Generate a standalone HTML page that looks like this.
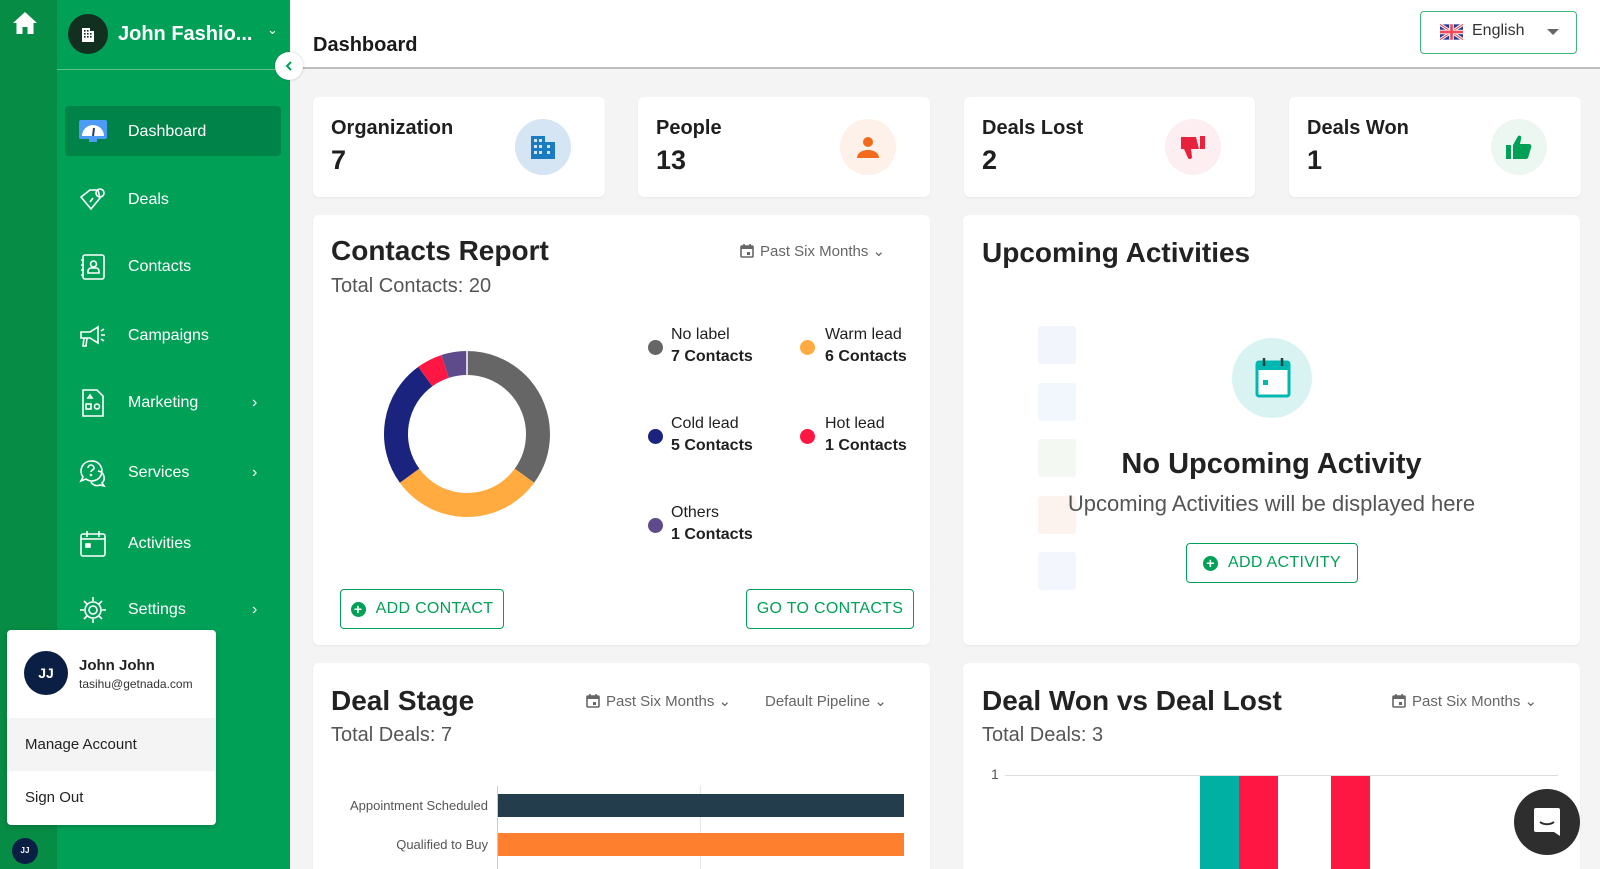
<!DOCTYPE html>
<html style="width:1600px;height:869px;overflow:hidden"><head><meta charset="utf-8"><style>
*{box-sizing:border-box;margin:0;padding:0}
body{width:1600px;height:869px;overflow:hidden;font-family:"Liberation Sans",sans-serif;background:#f4f4f4;position:relative;color:#1f1f1f}
.abs{position:absolute}
.strip{left:0;top:0;width:57px;height:869px;background:#078c45}
.side{left:57px;top:0;width:233px;height:869px;background:#00a157}
.nav{position:absolute;left:128px;color:#fff;font-size:16px;transform:translateY(-50%)}
.ico{position:absolute;left:78px;width:30px;height:30px;transform:translateY(-50%)}
.chev{position:absolute;left:252px;color:#fff;font-size:16px;transform:translateY(-50%)}
.card{position:absolute;background:#fff;border-radius:6px;box-shadow:0 1px 2px rgba(0,0,0,.06);overflow:hidden}
.stl{position:absolute;left:18px;top:20px;font-size:20px;font-weight:bold}
.stn{position:absolute;left:18px;top:48px;font-size:27px;font-weight:bold}
.sic{position:absolute;right:34px;top:22px;width:56px;height:56px;border-radius:50%}
.btn{position:absolute;border:1.5px solid #00a157;border-radius:4px;color:#00a157;font-size:16px;display:flex;align-items:center;justify-content:center;gap:10px;letter-spacing:.3px}
.plus{width:15px;height:15px;border-radius:50%;background:#00a157;color:#fff;font-size:14px;line-height:15px;text-align:center;font-weight:bold}
.lg{position:absolute;font-size:16px;line-height:22px}
.lg b{display:block}
.dot{position:absolute;width:15px;height:15px;border-radius:50%}
.h2{position:absolute;font-size:28px;font-weight:bold;color:#222}
.sub{position:absolute;font-size:20px;color:#555}
.flt{position:absolute;font-size:15px;color:#666;display:flex;align-items:center;gap:6px}
</style></head><body>
<svg width="0" height="0" style="position:absolute"><defs><symbol id="cal" viewBox="0 0 14 14"><rect x="1" y="2" width="12" height="11" rx="1" fill="none" stroke="#666" stroke-width="1.6"/><rect x="1" y="2" width="12" height="3" fill="#666"/><path d="M4 0v3M10 0v3" stroke="#666" stroke-width="1.6"/><rect x="7" y="8" width="3" height="3" fill="#666"/></symbol></defs></svg>
<div class="abs strip"></div>
<svg class="abs" style="left:12px;top:11px" width="26" height="24" viewBox="0 0 26 24"><path d="M13 1L1 12h3.5v11h6v-7h5v7h6V12H25z" fill="#fff"/></svg>
<div class="abs side"></div>
<div class="abs" style="left:68px;top:14px;width:40px;height:40px;border-radius:50%;background:#12301f"></div>
<svg class="abs" style="left:79px;top:25px" width="18" height="18" viewBox="0 0 18 18"><path d="M3 17V3h8v3h4v11z" fill="#fff"/><g fill="#12301f"><rect x="5" y="5" width="1.6" height="1.6"/><rect x="8" y="5" width="1.6" height="1.6"/><rect x="5" y="8" width="1.6" height="1.6"/><rect x="8" y="8" width="1.6" height="1.6"/><rect x="11" y="8" width="1.6" height="1.6"/><rect x="5" y="11" width="1.6" height="1.6"/><rect x="8" y="11" width="1.6" height="1.6"/><rect x="11" y="11" width="1.6" height="1.6"/></g></svg>
<div class="abs" style="left:118px;top:23px;color:#fff;font-size:20px;font-weight:bold">John Fashio...</div>
<div class="abs" style="left:267px;top:22px;color:#fff;font-size:13px">&#8964;</div>
<div class="abs" style="left:57px;top:69px;width:233px;height:1px;background:rgba(255,255,255,.35)"></div>

<div class="abs" style="left:65px;top:106px;width:216px;height:50px;background:#008348;border-radius:4px"></div>
<svg class="ico" style="top:131px" viewBox="0 0 30 30"><rect x="1" y="4" width="28" height="19" rx="2" fill="#4d9bf5"/><path d="M4 20a11 11 0 0122 0z" fill="#fff"/><path d="M15 20l1-8" stroke="#1f3c7a" stroke-width="2"/><rect x="11" y="23" width="8" height="3" fill="#4d9bf5"/></svg>
<div class="nav" style="top:132px">Dashboard</div>
<svg class="ico" style="top:200px" viewBox="0 0 30 30" fill="none" stroke="#fff" stroke-width="1.6"><path d="M3 12l9-7h8l2 8-9 11z"/><circle cx="22" cy="8" r="4"/><path d="M12 17l3-4"/></svg>
<div class="nav" style="top:200px">Deals</div>
<svg class="ico" style="top:267px" viewBox="0 0 30 30" fill="none" stroke="#fff" stroke-width="1.6"><rect x="5" y="3" width="21" height="24" rx="2"/><circle cx="15.5" cy="12" r="3"/><path d="M10 21h11v-2a3 3 0 00-3-3h-5a3 3 0 00-3 3z"/><path d="M3 8h3M3 13h3M3 18h3M3 23h3"/></svg>
<div class="nav" style="top:267px">Contacts</div>
<svg class="ico" style="top:336px" viewBox="0 0 30 30" fill="none" stroke="#fff" stroke-width="1.6"><path d="M3 11h9l8-5v16l-8-5H3z"/><path d="M6 17l-1 8h3l1-8"/><path d="M23 10l3-2M23 14h4M23 18l3 2"/></svg>
<div class="nav" style="top:336px">Campaigns</div>
<svg class="ico" style="top:403px" viewBox="0 0 30 30" fill="none" stroke="#fff" stroke-width="1.6"><path d="M5 2h14l6 6v20H5z"/><path d="M10 10l2-3 2 3z"/><rect x="8" y="16" width="5" height="5"/><circle cx="19" cy="18.5" r="2.5"/></svg>
<div class="nav" style="top:403px">Marketing</div><div class="chev" style="top:403px">›</div>
<svg class="ico" style="top:473px" viewBox="0 0 30 30" fill="none" stroke="#fff" stroke-width="1.6"><path d="M13 3a10 10 0 00-8 16l-2 4 5-2a10 10 0 105-18z"/><path d="M20 13a7 7 0 014 12l2 3-4-1a7 7 0 01-9-3"/><path d="M10 10a3 3 0 116 0c0 2-3 2-3 4"/><circle cx="13" cy="17" r=".5"/></svg>
<div class="nav" style="top:473px">Services</div><div class="chev" style="top:473px">›</div>
<svg class="ico" style="top:544px" viewBox="0 0 30 30" fill="none" stroke="#fff" stroke-width="1.6"><rect x="3" y="5" width="24" height="22" rx="2"/><path d="M3 10h24M9 2v6M21 2v6"/><rect x="8" y="15" width="4" height="3" fill="#fff"/></svg>
<div class="nav" style="top:544px">Activities</div>
<svg class="ico" style="top:610px" viewBox="0 0 30 30" fill="none" stroke="#fff" stroke-width="1.6"><circle cx="15" cy="15" r="4"/><circle cx="15" cy="15" r="8"/><path d="M15 2v4M15 24v4M2 15h4M24 15h4M6 6l3 3M21 21l3 3M6 24l3-3M21 9l3-3"/></svg>
<div class="nav" style="top:610px">Settings</div><div class="chev" style="top:610px">›</div>

<div class="abs" style="left:290px;top:0;width:1310px;height:69px;background:#fff;border-bottom:2px solid #bdbdbd"></div>
<div class="abs" style="left:313px;top:34px;font-size:20px;font-weight:bold;color:#1a1a1a">Dashboard</div>
<div class="abs" style="left:275px;top:52px;width:28px;height:28px;border-radius:50%;background:#fff;box-shadow:0 0 3px rgba(0,0,0,.2)"></div>
<svg class="abs" style="left:283px;top:60px" width="12" height="12" viewBox="0 0 12 12"><path d="M8 2L4 6l4 4" stroke="#00a157" stroke-width="2" fill="none"/></svg>
<div class="abs" style="left:1420px;top:11px;width:157px;height:43px;border:1.5px solid #3cb878;border-radius:4px"></div>
<svg class="abs" style="left:1440px;top:21px" width="23" height="22" viewBox="0 0 60 40"><rect width="60" height="40" fill="#273d8d"/><path d="M0 0l60 40M60 0L0 40" stroke="#fff" stroke-width="8"/><path d="M0 0l60 40M60 0L0 40" stroke="#f04a5a" stroke-width="3"/><path d="M30 0v40M0 20h60" stroke="#fff" stroke-width="12"/><path d="M30 0v40M0 20h60" stroke="#f04a5a" stroke-width="7"/></svg>
<div class="abs" style="left:1472px;top:22px;font-size:16px;color:#333">English</div>
<div class="abs" style="left:1547px;top:29px;width:0;height:0;border-left:6px solid transparent;border-right:6px solid transparent;border-top:6px solid #666"></div>

<div class="card" style="left:313px;top:97px;width:292px;height:100px"><div class="stl">Organization</div><div class="stn">7</div><div class="sic" style="background:#d5e5f3"><svg style="margin:14px" width="28" height="28" viewBox="0 0 28 28"><path d="M2 26V3h14v6h10v17z" fill="#1a7bc0"/><g fill="#d5e5f3"><rect x="5" y="6" width="3" height="3"/><rect x="10" y="6" width="3" height="3"/><rect x="5" y="12" width="3" height="3"/><rect x="10" y="12" width="3" height="3"/><rect x="18" y="12" width="3" height="3"/><rect x="5" y="18" width="3" height="3"/><rect x="10" y="18" width="3" height="3"/><rect x="18" y="18" width="3" height="3"/></g></svg></div></div>
<div class="card" style="left:638px;top:97px;width:292px;height:100px"><div class="stl">People</div><div class="stn">13</div><div class="sic" style="background:#fdf1ea"><svg style="margin:16px" width="24" height="24" viewBox="0 0 24 24"><circle cx="12" cy="7" r="5" fill="#f26b1d"/><path d="M1 23c0-5 5-8 11-8s11 3 11 8z" fill="#f26b1d"/></svg></div></div>
<div class="card" style="left:964px;top:97px;width:291px;height:100px"><div class="stl">Deals Lost</div><div class="stn">2</div><div class="sic" style="background:#fdeef1"><svg style="margin:14px" width="28" height="28" viewBox="0 0 28 28"><path d="M2 4h15l3 12H12l1 8c0 2-3 3-4 1L5 16H2z" fill="#e8213d"/><rect x="21" y="3" width="5" height="13" fill="#e8213d"/></svg></div></div>
<div class="card" style="left:1289px;top:97px;width:292px;height:100px"><div class="stl">Deals Won</div><div class="stn">1</div><div class="sic" style="background:#edf7f1"><svg style="margin:14px" width="28" height="28" viewBox="0 0 28 28"><rect x="1" y="12" width="5" height="14" fill="#00a157"/><path d="M8 12l5-9c2-1 4 0 3 3l-1 5h9c2 0 3 2 2 4l-3 10c-1 1-2 1-3 1H8z" fill="#00a157"/></svg></div></div>

<div class="card" style="left:313px;top:215px;width:617px;height:430px">
<div class="h2" style="left:18px;top:20px">Contacts Report</div>
<div class="sub" style="left:18px;top:60px">Total Contacts: 20</div>
<div class="flt" style="left:427px;top:27px"><svg width="14" height="14"><use href="#cal"/></svg>Past Six Months &#8964;</div>
</div>
<svg class="abs" style="left:383px;top:350px" width="168" height="168" viewBox="-84 -84 168 168">
<g fill="none" stroke-width="24">
<circle r="71" stroke="#666" stroke-dasharray="156.1 446" transform="rotate(-90)"/>
<circle r="71" stroke="#ffab40" stroke-dasharray="133.8 446" transform="rotate(36)"/>
<circle r="71" stroke="#1a237e" stroke-dasharray="111.5 446" transform="rotate(144)"/>
<circle r="71" stroke="#ff1744" stroke-dasharray="22.3 446" transform="rotate(234)"/>
<circle r="71" stroke="#5e4b8b" stroke-dasharray="22.3 446" transform="rotate(252)"/>
</g>
<g stroke="#fff" stroke-width="1.5"><path d="M0-84v25"/></g>
</svg>
<div class="dot" style="left:648px;top:340px;background:#666"></div><div class="lg" style="left:671px;top:324px">No label<b>7 Contacts</b></div>
<div class="dot" style="left:800px;top:340px;background:#ffab40"></div><div class="lg" style="left:825px;top:324px">Warm lead<b>6 Contacts</b></div>
<div class="dot" style="left:648px;top:429px;background:#1a237e"></div><div class="lg" style="left:671px;top:413px">Cold lead<b>5 Contacts</b></div>
<div class="dot" style="left:800px;top:429px;background:#ff1744"></div><div class="lg" style="left:825px;top:413px">Hot lead<b>1 Contacts</b></div>
<div class="dot" style="left:648px;top:518px;background:#5e4b8b"></div><div class="lg" style="left:671px;top:502px">Others<b>1 Contacts</b></div>
<div class="btn" style="left:340px;top:589px;width:164px;height:40px"><span class="plus">+</span>ADD CONTACT</div>
<div class="btn" style="left:746px;top:589px;width:168px;height:40px">GO TO CONTACTS</div>

<div class="card" style="left:963px;top:215px;width:617px;height:430px">
<div class="h2" style="left:19px;top:22px">Upcoming Activities</div>
<div style="position:absolute;left:75px;top:111px;width:38px;height:38px;background:#f0f3fb;border-radius:3px;opacity:.8"></div>
<div style="position:absolute;left:75px;top:168px;width:38px;height:38px;background:#eef5fd;border-radius:3px;opacity:.8"></div>
<div style="position:absolute;left:75px;top:224px;width:38px;height:38px;background:#f1f6ef;border-radius:3px;opacity:.8"></div>
<div style="position:absolute;left:75px;top:281px;width:38px;height:38px;background:#fdf0ea;border-radius:3px;opacity:.8"></div>
<div style="position:absolute;left:75px;top:337px;width:38px;height:38px;background:#f0f4fb;border-radius:3px;opacity:.8"></div>
<div style="position:absolute;left:269px;top:123px;width:80px;height:80px;border-radius:50%;background:#d9f3f3"></div>
<svg style="position:absolute;left:291px;top:141px" width="38" height="44" viewBox="0 0 38 44"><rect x="3" y="6" width="32" height="34" rx="2" fill="#fff" stroke="#00b8b0" stroke-width="3"/><rect x="3" y="6" width="32" height="8" fill="#00b8b0"/><path d="M10 2v8M28 2v8" stroke="#1a4040" stroke-width="2.5"/><rect x="9" y="24" width="5" height="5" fill="#00b8b0"/></svg>
<div style="position:absolute;left:0;width:617px;top:233px;text-align:center;font-size:29px;font-weight:bold;color:#222">No Upcoming Activity</div>
<div style="position:absolute;left:0;width:617px;top:276px;text-align:center;font-size:22px;color:#555">Upcoming Activities will be displayed here</div>
</div>
<div class="btn" style="left:1186px;top:543px;width:172px;height:40px"><span class="plus">+</span>ADD ACTIVITY</div>

<div class="card" style="left:313px;top:663px;width:617px;height:206px;border-radius:6px 6px 0 0">
<div class="h2" style="left:18px;top:22px">Deal Stage</div>
<div class="sub" style="left:18px;top:61px">Total Deals: 7</div>
<div class="flt" style="left:273px;top:29px"><svg width="14" height="14"><use href="#cal"/></svg>Past Six Months &#8964;</div>
<div class="flt" style="left:452px;top:29px">Default Pipeline &#8964;</div>
<div style="position:absolute;left:184px;top:123px;width:1px;height:100px;background:#ccc"></div>
<div style="position:absolute;left:387px;top:123px;width:1px;height:100px;background:#e6e6e6"></div>
<div style="position:absolute;left:185px;top:131px;width:406px;height:23px;background:#233d4d"></div>
<div style="position:absolute;left:185px;top:170px;width:406px;height:23px;background:#fe7f2d"></div>
<div style="position:absolute;right:442px;top:135px;font-size:13px;color:#555">Appointment Scheduled</div>
<div style="position:absolute;right:442px;top:174px;font-size:13px;color:#555">Qualified to Buy</div>
</div>

<div class="card" style="left:963px;top:663px;width:617px;height:206px;border-radius:6px 6px 0 0">
<div class="h2" style="left:19px;top:22px">Deal Won vs Deal Lost</div>
<div class="sub" style="left:19px;top:61px">Total Deals: 3</div>
<div class="flt" style="left:429px;top:29px"><svg width="14" height="14"><use href="#cal"/></svg>Past Six Months &#8964;</div>
<div style="position:absolute;left:28px;top:103px;font-size:14px;color:#555">1</div>
<div style="position:absolute;left:42px;top:112px;width:553px;height:1px;background:#ddd"></div>
<div style="position:absolute;left:237px;top:113px;width:39px;height:110px;background:#00b0a0"></div>
<div style="position:absolute;left:276px;top:113px;width:39px;height:110px;background:#ff1744"></div>
<div style="position:absolute;left:368px;top:113px;width:39px;height:110px;background:#ff1744"></div>
</div>

<div class="abs" style="left:1514px;top:789px;width:66px;height:66px;border-radius:50%;background:#2e2e2e"></div>
<svg class="abs" style="left:1532px;top:806px" width="30" height="32" viewBox="0 0 30 32"><path d="M4 2h22a2 2 0 012 2v26l-6-4H4a2 2 0 01-2-2V4a2 2 0 012-2z" fill="#fff"/><path d="M8 16c4 3 10 3 14 0" stroke="#2e2e2e" stroke-width="2" fill="none"/></svg>

<div class="abs" style="left:7px;top:630px;width:209px;height:195px;background:#fff;border-radius:4px;box-shadow:0 2px 6px rgba(0,0,0,.2)">
<div style="position:absolute;left:17px;top:21px;width:44px;height:44px;border-radius:50%;background:#0b1f45;color:#fff;font-size:14px;font-weight:bold;text-align:center;line-height:44px">JJ</div>
<div style="position:absolute;left:72px;top:27px;font-size:15px;font-weight:bold;color:#222">John John</div>
<div style="position:absolute;left:72px;top:47px;font-size:12px;color:#333">tasihu@getnada.com</div>
<div style="position:absolute;left:0;top:88px;width:209px;height:53px;background:#f4f4f4"></div>
<div style="position:absolute;left:18px;top:106px;font-size:15px;color:#222">Manage Account</div>
<div style="position:absolute;left:18px;top:159px;font-size:15px;color:#222">Sign Out</div>
</div>
<div class="abs" style="left:12px;top:838px;width:26px;height:26px;border-radius:50%;background:#0b1f45;color:#fff;font-size:8px;font-weight:bold;text-align:center;line-height:26px">JJ</div>
</body></html>
